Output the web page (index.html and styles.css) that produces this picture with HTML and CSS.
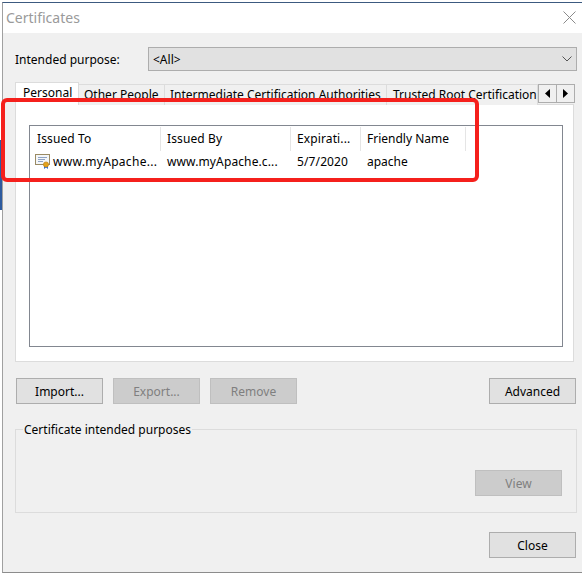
FILE: index.html
```html
<!DOCTYPE html>
<html lang="en">
<head>
<meta charset="utf-8">
<title>Certificates</title>
<link rel="stylesheet" href="styles.css">
</head>
<body>
<div class="backdrop"><span class="desk-blue"></span></div>
<main class="window">
  <header class="titlebar">
    <span class="title">Certificates</span>
    <svg class="close-x" width="13" height="13" viewBox="0 0 13 13"><path d="M0.5 0.5L12.5 12.5M12.5 0.5L0.5 12.5" stroke="#8a8a8a" stroke-width="1" fill="none"/></svg>
  </header>
  <div class="body">
    <div class="purpose">
      <span class="purpose-label">Intended purpose:</span>
      <div class="combo"><span>&lt;All&gt;</span>
        <svg width="10" height="6" viewBox="0 0 10 6"><path d="M0.5 0.5L5 5L9.5 0.5" stroke="#555" fill="none"/></svg>
      </div>
    </div>
    <div class="tabs">
      <span class="tab active">Personal</span>
      <span class="tab t2">Other People</span>
      <span class="tab t3">Intermediate Certification Authorities</span>
      <span class="tab t4">Trusted Root Certification</span>
      <span class="scroll">
        <span class="arrow"><svg width="5" height="9" viewBox="0 0 5 9"><path d="M5 0V9L0 4.5Z" fill="#000"/></svg></span>
        <span class="arrow"><svg width="5" height="9" viewBox="0 0 5 9"><path d="M0 0V9L5 4.5Z" fill="#000"/></svg></span>
      </span>
    </div>
    <section class="panel">
      <div class="list">
        <div class="row head">
          <span class="c c1">Issued To</span>
          <span class="c c2">Issued By</span>
          <span class="c c3">Expirati...</span>
          <span class="c c4">Friendly Name</span>
        </div>
        <div class="row item">
          <span class="c c1 first">
            <svg class="cert" width="17" height="15" viewBox="0 0 17 15">
              <rect x="0.5" y="0.5" width="14" height="10" fill="#f4f6f8" stroke="#9a8a63"/>
              <path d="M3 3.5H12M3 5.5H10M3 7.5H8" stroke="#8fa3c4" fill="none"/>
              <path d="M9 11V15L11 13.5L13 15V11Z" fill="#2f6fd0"/>
              <circle cx="11" cy="10.5" r="2.6" fill="#e3a31e" stroke="#b87a10" stroke-width="0.6"/>
            </svg>www.myApache...</span>
          <span class="c c2">www.myApache.c...</span>
          <span class="c c3">5/7/2020</span>
          <span class="c c4">apache</span>
        </div>
      </div>
    </section>
    <div class="actions">
      <button class="btn" type="button">Import...</button>
      <button class="btn off" type="button">Export...</button>
      <button class="btn off" type="button">Remove</button>
      <button class="btn push" type="button">Advanced</button>
    </div>
    <fieldset class="group">
      <legend>Certificate intended purposes</legend>
      <button class="btn off" type="button">View</button>
    </fieldset>
    <div class="footer"><button class="btn" type="button">Close</button></div>
  </div>
</main>
<div class="annotation"></div>
</body>
</html>
```
FILE: styles.css
```css
* { box-sizing: border-box; }
html, body { margin: 0; height: 100%; }
body {
  width: 582px; height: 574px; overflow: hidden; position: relative;
  background: #f0f0f0;
  font-family: "Noto Sans", "Liberation Sans", sans-serif;
  font-size: 12px; color: #000;
  padding: 2px 0 0 2px;
}
.backdrop { position: absolute; left: 0; top: 0; width: 582px; height: 574px; background: #fff; }
.desk-blue { position: absolute; left: 0; top: 140px; width: 3px; height: 70px; background: #2d5a9e; }
.window {
  position: relative; width: 580px; height: 571px;
  border-left: 1px solid #a0a0a0; border-bottom: 1px solid #8c8c8c; border-top: 1px solid #3c5a80;
  background: #f0f0f0; display: flex; flex-direction: column;
}
.titlebar { height: 30px; background: #fff; display: flex; align-items: center; justify-content: space-between; padding: 0 6px 2px 3px; flex: none; }
.title { font-size: 14px; color: #9a9a9a; }
.body { flex: 1; padding: 14px 5px 0 12px; display: flex; flex-direction: column; }
.purpose { display: flex; align-items: center; height: 24px; }
.purpose-label { width: 133px; }
.combo { width: 429px; height: 24px; background: #e1e1e1; border: 1px solid #adadad; display: flex; justify-content: space-between; align-items: center; padding: 0 4px 0 4px; }
.tabs { display: flex; align-items: flex-end; height: 23px; margin-top: 11px; position: relative; z-index: 1; }
.tab { height: 21px; border: 1px solid #dcdcdc; border-bottom: 0; border-left: 0; background: #f0f0f0; line-height: 20px; padding-left: 5px; white-space: nowrap; overflow: hidden; flex: none; }
.tab.active { height: 23px; width: 64px; background: #fff; border-left: 1px solid #dcdcdc; padding-left: 7px; line-height: 19px; }
.t2 { width: 86px; }
.t3 { width: 222px; }
.t4 { width: 151px; padding-left: 6px; }
.scroll { display: flex; height: 19px; margin-bottom: 2px; }
.arrow { width: 19px; height: 19px; background: #f0f0f0; border: 1px solid #adadad; display: flex; align-items: center; justify-content: center; margin-right: -1px; }
.panel { width: 559px; height: 258px; background: #fff; border: 1px solid #dcdcdc; margin-top: -1px; padding: 20px 10px 0 13px; }
.list { width: 534px; height: 222px; border: 1px solid #828790; background: #fff; }
.row { display: flex; }
.row.head { height: 24px; margin-top: 1px; align-items: center; }
.row.item { height: 20px; margin-top: 0; align-items: center; }
.c { white-space: nowrap; flex: none; padding-left: 7px; letter-spacing: 0.12px; }
.head .c { border-right: 1px solid #e5e5e5; height: 24px; line-height: 24px; }
.c1 { width: 131px; }
.c2 { width: 130px; padding-left: 6px; }
.c3 { width: 70px; padding-left: 6px; }
.c4 { width: 105px; padding-left: 6px; letter-spacing: 0; }
.first { display: flex; align-items: center; padding-left: 5px; letter-spacing: 0.3px; }
.cert { margin-right: 1px; flex: none; }
.btn { width: 87px; height: 26px; border: 1px solid #adadad; background: #e1e1e1; font: inherit; color: #000; padding: 0; flex: none; }
.btn.off { background: #cccccc; border-color: #bfbfbf; color: #7f7f7f; }
.actions { display: flex; gap: 10px; margin-top: 16px; padding: 0 1px; }
.push { margin-left: auto; }
.group { width: 562px; height: 92px; margin: 17px 0 0; padding: 0 14px 0 0; border: 1px solid #dcdcdc; display: block; position: relative; }
.group legend { margin-left: 7px; padding: 0 1px; }
.group .btn { display: block; margin: 32px 0 0 auto; }
.footer { display: flex; justify-content: flex-end; margin-top: 19px; padding-right: 1px; }
.annotation { position: absolute; z-index: 2; left: 1px; top: 98px; width: 478px; height: 84px; border: 4px solid #f5201c; border-radius: 6px; pointer-events: none; }
```
